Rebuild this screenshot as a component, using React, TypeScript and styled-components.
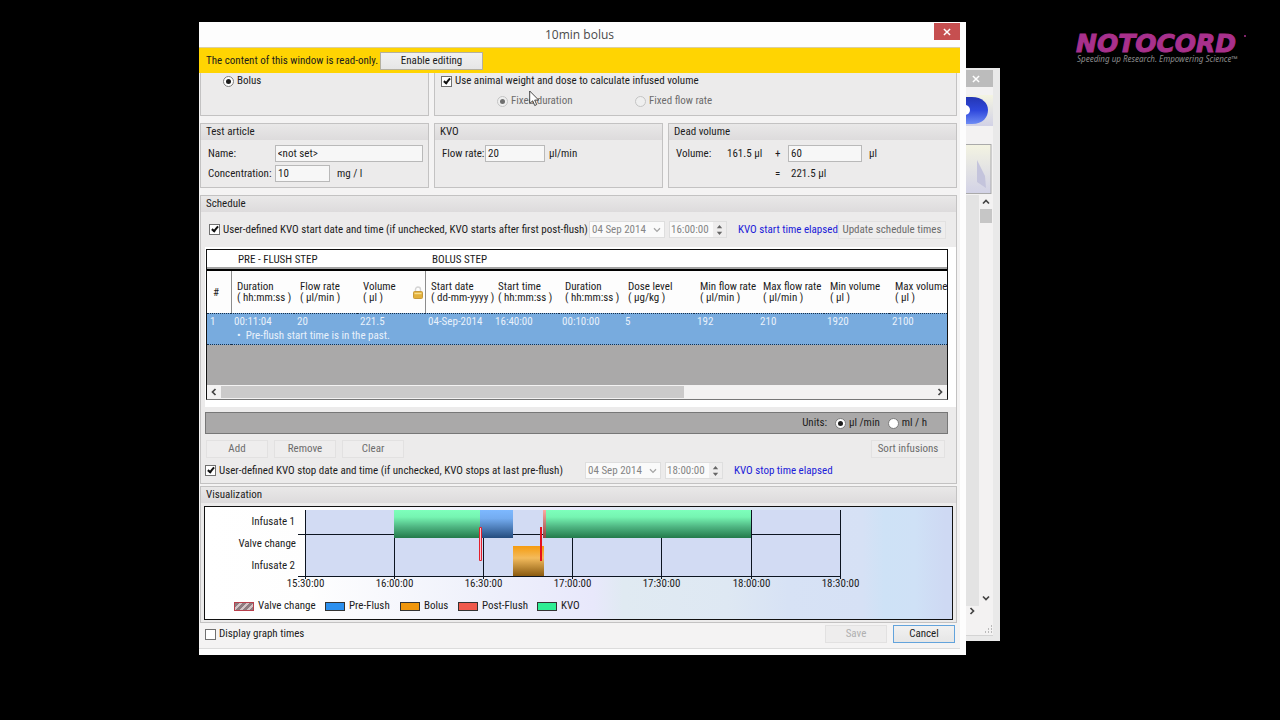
import React from "react";
import styled, { createGlobalStyle } from "styled-components";

const GlobalStyle = createGlobalStyle`
  *, *::before, *::after { box-sizing: border-box; }
  body {
    margin: 0;
    background: #000;
    color: #1c1c1c;
    font-family: "Roboto Condensed", "Liberation Sans", sans-serif;
    font-size: 11px;
    line-height: 12px;
  }
  button, input, select { font: inherit; color: inherit; margin: 0; }
`;

const Desktop = styled.main`
  position: relative;
  min-height: 100vh;
  overflow: hidden;
  background: #000;
`;

/* ---------- brand ---------- */

const Brand = styled.div`
  position: absolute;
  top: 31px;
  right: 24px;
  width: 180px;
`;

const BrandSvg = styled.svg`
  display: block;
  width: 100%;
  overflow: visible;
`;

/* ---------- window behind the dialog ---------- */

const BackWindow = styled.section`
  position: absolute;
  top: 68px;
  right: 280px;
  width: 300px;
  height: 573px;
  padding: 2px 7px 5px 0;
  background: #e9e9e9;
  display: flex;
  flex-direction: column;
  align-items: flex-end;
`;

const BackClose = styled.button`
  width: 34px;
  height: 17px;
  border: 0;
  padding: 0 1px 0 0;
  background: #bcbcbc;
  color: #fff;
  display: flex;
  align-items: center;
  justify-content: center;
`;

const BackToolbar = styled.div`
  width: 100%;
  height: 108px;
  padding-top: 8px;
  background: #f3f2f2;
  display: flex;
  flex-direction: column;
  align-items: flex-end;
  gap: 18px;
`;

const BackBody = styled.div`
  width: 100%;
  flex: 1;
  display: flex;
  justify-content: flex-end;
  background: #e3e3e3;
`;

const BackScroll = styled.div`
  width: 14px;
  background: #f3f2f2;
  display: flex;
  flex-direction: column;
  align-items: center;
  justify-content: space-between;
  padding: 3px 0 4px;
`;

const BackThumb = styled.div`
  width: 12px;
  height: 14px;
  margin-top: 3px;
  background: #c6c6c6;
`;

const ScrollTop = styled.div`
  display: flex;
  flex-direction: column;
  align-items: center;
`;

const BackFoot = styled.div`
  width: 100%;
  height: 30px;
  background: #f3f2f2;
  border-bottom: 1px solid #d4d4d4;
  display: flex;
  justify-content: flex-end;
  padding: 1px 0 1px;
`;

const BackFootInner = styled.div`
  width: 25px;
  display: flex;
  justify-content: space-between;
`;

const Grip = styled.svg`
  align-self: flex-end;
`;

/* ---------- dialog ---------- */

const Dialog = styled.section`
  position: absolute;
  top: 22px;
  left: 199px;
  right: 314px;
  padding: 0 6px 6px 0;
  background: #fdfdfd;
`;

const TitleBar = styled.header`
  height: 25px;
  display: grid;
  grid-template-columns: 1fr auto 1fr;
`;

const Title = styled.h1`
  grid-column: 2;
  margin: 0;
  font: 400 12px/26px "Open Sans", "Noto Sans", sans-serif;
  color: #4a4a4a;
`;

const CloseButton = styled.button`
  justify-self: end;
  width: 26px;
  height: 17px;
  margin-top: 1px;
  padding: 0;
  border: 0;
  background: #c64f50;
  display: flex;
  align-items: center;
  justify-content: center;
`;

const Banner = styled.div`
  height: 26px;
  border-top: 1px solid #d9cfa6;
  background: #ffd402;
  padding-left: 7px;
  display: flex;
  align-items: center;
  gap: 3px;
`;

const BannerText = styled.span`
  width: 171px;
  white-space: nowrap;
`;

const Button = styled.button<{ $w: number; $primary?: boolean; $faint?: boolean }>`
  width: ${(p) => p.$w}px;
  height: 18px;
  padding: 0;
  white-space: nowrap;
  border: 1px solid ${(p) => (p.$primary ? "#62a3dc" : "#b4b0a0")};
  background: linear-gradient(#f1f1f1, #e6e6e6);
  &:disabled {
    color: ${(p) => (p.$faint ? "#b0b0b0" : "#6c6c6c")};
    border-color: #e2e1e1;
    background: #eeeded;
  }
`;

const Body = styled.div`
  padding: 0 3px 0 1px;
  background: #f4f3f3;
  border-bottom: 1px solid #dcdcdc;
`;

const PanelRow = styled.div`
  display: grid;
  grid-template-columns: 229px 229px 1fr;
  gap: 5px;
  margin-bottom: 7px;
`;

const Panel = styled.section<{ $h?: number; $open?: boolean; $span?: number; $gap?: number }>`
  ${(p) => (p.$h ? `min-height: ${p.$h}px;` : "")}
  ${(p) => (p.$span ? `grid-column: span ${p.$span};` : "")}
  margin-bottom: ${(p) => p.$gap ?? 0}px;
  border: 1px solid #c3c2c2;
  ${(p) => (p.$open ? "border-top: 0;" : "")}
  background: #ecebeb;
`;

const PanelTitle = styled.h2`
  margin: 0;
  height: 16px;
  padding-left: 5px;
  font-size: 11px;
  font-weight: 400;
  line-height: 15px;
  background: linear-gradient(#e9e8e8, #dddbdc);
`;

const Fields = styled.div`
  padding: 5px 5px 0 7px;
  display: flex;
  flex-direction: column;
  gap: 3px;
`;

const FieldRow = styled.div`
  height: 17px;
  display: flex;
  align-items: center;
  white-space: nowrap;
`;

const FieldLabel = styled.label<{ $w: number }>`
  width: ${(p) => p.$w}px;
`;

const Value = styled.output<{ $w: number }>`
  width: ${(p) => p.$w}px;
`;

const TextInput = styled.input<{ $w: number; $after?: number }>`
  width: ${(p) => p.$w}px;
  margin-right: ${(p) => p.$after ?? 0}px;
  height: 17px;
  padding: 0 2px;
  border: 1px solid #b9b9b9;
  border-radius: 0;
  background: #f7f7f7;
`;

const CheckLabel = styled.label<{ $w?: number; $dim?: boolean }>`
  display: inline-flex;
  align-items: center;
  gap: 3px;
  white-space: nowrap;
  ${(p) => (p.$w ? `width: ${p.$w}px; flex: none;` : "")}
  color: ${(p) => (p.$dim ? "#6c6c6c" : "inherit")};
`;

const CheckBox = styled.input.attrs({ type: "checkbox" })`
  appearance: none;
  flex: none;
  width: 11px;
  height: 11px;
  border: 1px solid #707070;
  background: #fff;
  display: grid;
  place-items: center;
  &:checked::after {
    content: "";
    width: 4px;
    height: 7px;
    margin-bottom: 2px;
    border: solid #111;
    border-width: 0 2px 2px 0;
    transform: rotate(40deg);
  }
`;

const Radio = styled.input.attrs({ type: "radio" })`
  appearance: none;
  flex: none;
  width: 11px;
  height: 11px;
  border: 1px solid #7c7c7c;
  border-radius: 50%;
  background: #fff;
  display: grid;
  place-items: center;
  &:checked::after {
    content: "";
    width: 5px;
    height: 5px;
    border-radius: 50%;
    background: #1c1c1c;
  }
  &:disabled { border-color: #c4c4c4; background: #efefef; }
  &:disabled:checked::after { background: #6f6f6f; }
`;

const ModeOptions = styled.div`
  padding: 2px 0 0 6px;
  display: flex;
  flex-direction: column;
  gap: 8px;
`;

const TypeOptions = styled.div`
  padding: 2px 0 0 22px;
  display: flex;
`;

const SubOptions = styled.div`
  padding-left: 56px;
  display: grid;
  grid-template-columns: 138px auto;
  justify-content: start;
`;

/* ---------- schedule ---------- */

const KvoRow = styled.div<{ $indent: number; $h: number }>`
  height: ${(p) => p.$h}px;
  padding-left: ${(p) => p.$indent}px;
  display: flex;
  align-items: center;
`;

const DateBox = styled.span`
  position: relative;
  display: flex;
  flex: none;
  width: 76px;
  height: 17px;
`;

const DateSelect = styled.select`
  appearance: none;
  width: 100%;
  padding: 0 2px;
  border: 1px solid #dedede;
  border-radius: 0;
  background: #fafafa;
  &:disabled { color: #858585; opacity: 1; }
`;

const DateChevron = styled.svg`
  position: absolute;
  right: 4px;
  top: 6px;
  pointer-events: none;
`;

const TimeBox = styled.span`
  flex: none;
  display: flex;
  align-items: center;
  width: 58px;
  height: 17px;
  margin: 0 11px 0 4px;
  border: 1px solid #dedede;
  background: #eeeded;
`;

const TimeInput = styled.input`
  width: 43px;
  height: 15px;
  margin-right: 3px;
  padding: 0 1px;
  border: 0;
  background: #fafafa;
  &:disabled { color: #858585; }
`;

const Status = styled.span`
  width: 100px;
  flex: none;
  color: #2020d8;
  white-space: nowrap;
`;

const GridWrap = styled.div`
  margin-left: 4px;
  padding: 2px 8px 7px 1px;
  background: #fff;
`;

const GridFrame = styled.div`
  border: 1px solid #111;
  border-bottom-color: #777;
  background: #aaa9a9;
  overflow: hidden;
`;

const GridTable = styled.table`
  width: 100%;
  table-layout: fixed;
  border-collapse: separate;
  border-spacing: 0;
  line-height: 11px;
`;

const GroupHead = styled.th`
  height: 21px;
  padding: 0 0 1px 7px;
  text-align: left;
  font-weight: 400;
  background: #fff;
  border-bottom: 2px solid #000;
  box-shadow: inset 0 -2px #a3a3a3;
`;

const ColHead = styled.th<{ $line?: boolean }>`
  height: 42px;
  padding: 0 0 0 6px;
  text-align: left;
  font-weight: 400;
  white-space: pre;
  background: #fdfdfd;
  ${(p) => (p.$line ? "padding-left: 5px; border-left: 1px solid #8c8c8c;" : "")}
`;

const HeadWithLock = styled.span`
  display: flex;
  align-items: center;
  justify-content: space-between;
  padding-right: 2px;
`;

const Cell = styled.td`
  height: 16px;
  padding: 0 0 0 3px;
  overflow: hidden;
  white-space: nowrap;
  color: #e8f1fb;
  background: #78abde;
  border-top: 1px dotted #16304c;
`;

const NoteCell = styled.td`
  height: 16px;
  padding: 0 0 3px 6px;
  white-space: pre;
  color: #e8f1fb;
  background: #78abde;
  border-bottom: 1px dotted #16304c;
`;

const GridBlank = styled.div`
  height: 40px;
`;

const HScroll = styled.div`
  height: 14px;
  padding: 0 3px;
  background: #f3f2f2;
  display: flex;
  align-items: center;
  justify-content: space-between;
`;

const HTrack = styled.div`
  flex: 1;
  height: 12px;
  margin: 0 3px;
`;

const HThumb = styled.div`
  width: 65%;
  height: 100%;
  background: #cbcaca;
`;

const UnitsBar = styled.fieldset`
  height: 22px;
  margin: 5px 8px 6px 4px;
  padding: 0 20px 0 0;
  border: 1px solid #777;
  background: #aaa9a9;
  display: flex;
  align-items: center;
  justify-content: flex-end;
  gap: 8px;
`;

const ButtonRow = styled.div`
  padding: 0 11px 0 5px;
  display: flex;
  gap: 6px;
`;

const Spacer = styled.span`
  flex: 1;
`;

/* ---------- visualization ---------- */

const ChartBox = styled.div`
  margin: 3px 3px 2px;
  height: 114px;
  border: 1px solid #111;
  background: linear-gradient(
    90deg,
    #fff 0%, #fefefe 14%, #eef0fb 38%, #e8e8fb 52%, #e0eaf2 56%,
    #dee8f3 70%, #d7e2f5 78%, #d6e1f5 88%, #cee2f6 91%, #cfe1f6 95%, #ced9f3 99%
  );
`;

const ChartSvg = styled.svg`
  display: block;
  max-width: 100%;
  font-size: 11px;
`;

const Legend = styled.ul`
  list-style: none;
  margin: 8px 0 0;
  padding: 0 0 0 29px;
  display: flex;
  gap: 11px;
`;

const LegendItem = styled.li<{ $w: number }>`
  width: ${(p) => p.$w}px;
  display: flex;
  align-items: center;
  gap: 4px;
  white-space: nowrap;
`;

const Swatch = styled.span<{ $fill: string; $edge?: string }>`
  flex: none;
  width: 20px;
  height: 9px;
  border: 1px solid ${(p) => p.$edge ?? "#333"};
  background: ${(p) => p.$fill};
`;

const Footer = styled.footer`
  height: 25px;
  padding: 0 2px 3px 5px;
  display: flex;
  align-items: center;
  gap: 6px;
`;

const Pointer = styled.svg`
  position: absolute;
  left: 529px;
  top: 90px;
`;

/* ---------- small drawings ---------- */

const Cross = () => (
  <svg width="8" height="8" viewBox="0 0 7 7" aria-hidden>
    <path d="M.8.8 6.2 6.2M6.2.8.8 6.2" stroke="#fff" strokeWidth="1.3" />
  </svg>
);

const arrows = {
  left: "M5.5 1 2.5 4 5.5 7",
  right: "M2.5 1 5.5 4 2.5 7",
  up: "M1 5.5 4 2.5 7 5.5",
  down: "M1 2.5 4 5.5 7 2.5",
};

const Arrow = ({ dir }: { dir: keyof typeof arrows }) => (
  <svg width="8" height="8" viewBox="0 0 8 8" aria-hidden>
    <path d={arrows[dir]} fill="none" stroke="#444" strokeWidth="1.7" />
  </svg>
);

const Lock = () => (
  <svg width="10" height="13" viewBox="0 0 10 13" aria-hidden>
    <path d="M2.5 6V3.5a2.5 2.5 0 0 1 5 0V6" fill="none" stroke="#d4d4d4" strokeWidth="1.4" />
    <rect x=".5" y="5.5" width="9" height="7" rx="1" fill="#e3b13c" stroke="#c79a3c" />
    <path d="M1.5 7.5h7" stroke="#f8df8e" strokeWidth="1.4" />
  </svg>
);

/* ---------- pieces ---------- */

type KvoProps = { id: string; text: string; time: string; status: string; indent: number; h: number; children?: React.ReactNode };

const KvoSchedule = ({ id, text, time, status, indent, h, children }: KvoProps) => (
  <KvoRow $indent={indent} $h={h}>
    <CheckLabel $w={380}>
      <CheckBox defaultChecked />
      {text}
    </CheckLabel>
    <DateBox>
      <DateSelect disabled aria-label={`KVO ${id} date`}>
        <option>04 Sep 2014</option>
      </DateSelect>
      <DateChevron width="8" height="6" viewBox="0 0 8 6" aria-hidden>
        <path d="M1 1.2 4 4.4 7 1.2" fill="none" stroke="#a5a5a5" strokeWidth="1.3" />
      </DateChevron>
    </DateBox>
    <TimeBox>
      <TimeInput disabled defaultValue={time} aria-label={`KVO ${id} time`} />
      <svg width="7" height="12" viewBox="0 0 7 12" aria-hidden>
        <path d="M3.5 1 6.2 4.3H.8zM3.5 11 .8 7.7h5.4z" fill="#666" />
      </svg>
    </TimeBox>
    <Status>{status}</Status>
    {children}
  </KvoRow>
);

const widths = [24, 63, 63, 68, 67, 67, 63, 72, 63, 67, 65];

const columns: [string, string][] = [
  ["Duration", "( hh:mm:ss )"],
  ["Flow rate", "( µl/min )"],
  ["Volume", "( µl )"],
  ["Start date", "( dd-mm-yyyy )"],
  ["Start time", "( hh:mm:ss )"],
  ["Duration", "( hh:mm:ss )"],
  ["Dose level", "( µg/kg )"],
  ["Min flow rate", "( µl/min )"],
  ["Max flow rate", "( µl/min )"],
  ["Min volume", "( µl )"],
  ["Max volume", "( µl )"],
];

const values = ["1", "00:11:04", "20", "221.5", "04-Sep-2014", "16:40:00", "00:10:00", "5", "192", "210", "1920", "2100"];

const ScheduleGrid = () => (
  <GridTable>
    <colgroup>
      {widths.map((w, i) => (
        <col key={i} width={w} />
      ))}
      <col />
    </colgroup>
    <thead>
      <tr>
        <GroupHead />
        <GroupHead colSpan={3}>PRE - FLUSH STEP</GroupHead>
        <GroupHead colSpan={8}>BOLUS STEP</GroupHead>
      </tr>
      <tr>
        <ColHead>#</ColHead>
        {columns.map(([name, unit], i) => (
          <ColHead key={i} $line={i === 0 || i === 3}>
            {i === 2 ? (
              <HeadWithLock>
                <span>{name + "\n" + unit}</span>
                <Lock />
              </HeadWithLock>
            ) : (
              name + "\n" + unit
            )}
          </ColHead>
        ))}
      </tr>
    </thead>
    <tbody>
      <tr>
        {values.map((v, i) => (
          <Cell key={i}>{v}</Cell>
        ))}
      </tr>
      <tr>
        <NoteCell />
        <NoteCell colSpan={11}>{"•  Pre-flush start time is in the past."}</NoteCell>
      </tr>
    </tbody>
  </GridTable>
);

const ticks = ["15:30:00", "16:00:00", "16:30:00", "17:00:00", "17:30:00", "18:00:00", "18:30:00"];
const tickX = (i: number) => Math.floor(100 + i * 89.2) + 0.5;

const Timeline = () => (
  <ChartSvg width="700" height="85" viewBox="0 0 700 85" role="img" aria-label="Infusion timeline">
    <defs>
      <linearGradient id="kvo" x2="0" y2="1">
        <stop offset="0" stopColor="#7dffbb" />
        <stop offset=".25" stopColor="#76f5b2" />
        <stop offset=".6" stopColor="#4fb582" />
        <stop offset="1" stopColor="#237a4a" />
      </linearGradient>
      <linearGradient id="pre" x2="0" y2="1">
        <stop offset="0" stopColor="#7db8ff" />
        <stop offset=".3" stopColor="#74acf0" />
        <stop offset="1" stopColor="#244c7e" />
      </linearGradient>
      <linearGradient id="bolus" x2="0" y2="1">
        <stop offset="0" stopColor="#f59b0e" />
        <stop offset=".4" stopColor="#f3bb5c" />
        <stop offset="1" stopColor="#8a5a10" />
      </linearGradient>
      <linearGradient id="post" x2="0" y2="1">
        <stop offset="0" stopColor="#ffa8a0" />
        <stop offset="1" stopColor="#8c4640" />
      </linearGradient>
    </defs>
    <rect x="100" y="3" width="536" height="67" fill="#d2dbf3" />
    <g stroke="#0c1420">
      {ticks.map((t, i) => (
        <path key={t} d={`M${tickX(i)} 3V72`} />
      ))}
      <path d="M93 27.5H636M93 69.5H636" />
    </g>
    <rect x="189" y="3" width="86" height="28" fill="url(#kvo)" />
    <rect x="275" y="3" width="33" height="28" fill="url(#pre)" />
    <rect x="308" y="39" width="31" height="30" fill="url(#bolus)" />
    <rect x="338" y="3" width="3" height="28" fill="url(#post)" />
    <rect x="341" y="3" width="205" height="28" fill="url(#kvo)" />
    <path d="M274.5 20.5h2v33h-2z" fill="#f6c8d4" stroke="#e3202c" />
    <path d="M336 20v34" stroke="#e3101c" strokeWidth="2" />
    <g fill="#1c1c1c" textAnchor="end">
      <text x="90" y="18">Infusate 1</text>
      <text x="91" y="40">Valve change</text>
      <text x="90" y="62">Infusate 2</text>
    </g>
    <g fill="#1c1c1c" textAnchor="middle">
      {ticks.map((t, i) => (
        <text key={t} x={tickX(i)} y="80">
          {t}
        </text>
      ))}
    </g>
  </ChartSvg>
);

const hatch = "repeating-linear-gradient(135deg, #8e7c80 0 3px, #d3c4c6 3px 5px)";
const legend: [string, string, number, string?][] = [
  ["Valve change", hatch, 80, "#b8404c"],
  ["Pre-Flush", "#2c90ee", 64],
  ["Bolus", "#f0960c", 47],
  ["Post-Flush", "#f05a4c", 68],
  ["KVO", "#2eee94", 44],
];

export default function App() {
  return (
    <Desktop>
      <GlobalStyle />

      <Brand>
        <BrandSvg viewBox="0 0 180 34" role="img" aria-label="Notocord">
          <text x="0" y="21" fill="#a8308c" stroke="#a8308c" strokeWidth="1" fontFamily="'DejaVu Sans', sans-serif" fontWeight="700" fontStyle="italic" fontSize="25">
            NOTOCORD
          </text>
          <circle cx="169" cy="5" r="1" fill="#a8308c" />
          <text x="1" y="31" fill="#8c8c8c" fontFamily="'Noto Sans', 'Open Sans', sans-serif" fontStyle="italic" fontSize="8">
            Speeding up Research. Empowering Science™
          </text>
        </BrandSvg>
      </Brand>

      <BackWindow>
        <BackClose aria-label="Close window">
          <Cross />
        </BackClose>
        <BackToolbar>
          <svg width="34" height="31" viewBox="0 0 34 31" aria-hidden>
            <defs>
              <linearGradient id="blob" x2="0" y2="1">
                <stop offset="0" stopColor="#2436b4" />
                <stop offset=".5" stopColor="#2f48dc" />
                <stop offset="1" stopColor="#6e8cf4" />
              </linearGradient>
              <linearGradient id="tile" x2="0" y2="1">
                <stop offset="0" stopColor="#f4f4e2" />
                <stop offset="1" stopColor="#d2d2e6" />
              </linearGradient>
            </defs>
            <rect width="34" height="31" fill="url(#tile)" />
            <path d="M0 2h13c10 0 16 6 16 13S24 29 13 29H0z" fill="url(#blob)" />
            <circle cx="6" cy="15" r="5" fill="#fff" />
          </svg>
          <svg width="34" height="50" viewBox="0 0 34 50" aria-hidden>
            <rect x="-1" y=".5" width="33" height="49" fill="url(#tile)" stroke="#aaa" />
            <path d="M18 16 26 32 27 44 18 38z" fill="#c4c4dc" />
          </svg>
        </BackToolbar>
        <BackBody>
          <BackScroll>
            <ScrollTop>
              <Arrow dir="up" />
              <BackThumb />
            </ScrollTop>
            <Arrow dir="down" />
          </BackScroll>
        </BackBody>
        <BackFoot>
          <BackFootInner>
            <Arrow dir="right" />
            <Grip width="9" height="9" viewBox="0 0 9 9" aria-hidden>
              <path d="M7 1h1M4 4h1M7 4h1M1 7h1M4 7h1M7 7h1" stroke="#a8a8a8" strokeWidth="1.6" />
            </Grip>
          </BackFootInner>
        </BackFoot>
      </BackWindow>

      <Dialog role="dialog" aria-labelledby="dialog-title">
        <TitleBar>
          <Title id="dialog-title">10min bolus</Title>
          <CloseButton aria-label="Close">
            <Cross />
          </CloseButton>
        </TitleBar>
        <Banner>
          <BannerText>The content of this window is read-only.</BannerText>
          <Button $w={103}>Enable editing</Button>
        </Banner>

        <Body>
          <PanelRow>
            <Panel $h={43} $open>
              <TypeOptions>
                <CheckLabel>
                  <Radio name="type" defaultChecked />
                  Bolus
                </CheckLabel>
              </TypeOptions>
            </Panel>
            <Panel $h={43} $open $span={2}>
              <ModeOptions>
                <CheckLabel>
                  <CheckBox defaultChecked />
                  Use animal weight and dose to calculate infused volume
                </CheckLabel>
                <SubOptions>
                  <CheckLabel $dim>
                    <Radio name="mode" defaultChecked disabled />
                    Fixed duration
                  </CheckLabel>
                  <CheckLabel $dim>
                    <Radio name="mode" disabled />
                    Fixed flow rate
                  </CheckLabel>
                </SubOptions>
              </ModeOptions>
            </Panel>
          </PanelRow>

          <PanelRow>
            <Panel $h={65}>
              <PanelTitle>Test article</PanelTitle>
              <Fields>
                <FieldRow>
                  <FieldLabel $w={67} htmlFor="name">Name:</FieldLabel>
                  <TextInput $w={149} id="name" defaultValue="<not set>" />
                </FieldRow>
                <FieldRow>
                  <FieldLabel $w={67} htmlFor="conc">Concentration:</FieldLabel>
                  <TextInput $w={55} $after={7} id="conc" defaultValue="10" />
                  mg / l
                </FieldRow>
              </Fields>
            </Panel>
            <Panel $h={65}>
              <PanelTitle>KVO</PanelTitle>
              <Fields>
                <FieldRow>
                  <FieldLabel $w={43} htmlFor="flow">Flow rate:</FieldLabel>
                  <TextInput $w={60} $after={4} id="flow" defaultValue="20" />
                  µl/min
                </FieldRow>
              </Fields>
            </Panel>
            <Panel $h={65}>
              <PanelTitle>Dead volume</PanelTitle>
              <Fields>
                <FieldRow>
                  <FieldLabel $w={51} htmlFor="dead">Volume:</FieldLabel>
                  <Value $w={48}>161.5 µl</Value>
                  <Value $w={13}>+</Value>
                  <TextInput $w={74} $after={7} id="dead" defaultValue="60" />
                  µl
                </FieldRow>
                <FieldRow>
                  <Value $w={99} />
                  <Value $w={16}>=</Value>
                  <Value $w={48}>221.5 µl</Value>
                </FieldRow>
              </Fields>
            </Panel>
          </PanelRow>

          <Panel $h={289} $gap={2}>
            <PanelTitle>Schedule</PanelTitle>
            <KvoSchedule
              id="start"
              text="User-defined KVO start date and time (if unchecked, KVO starts after first post-flush)"
              time="16:00:00"
              status="KVO start time elapsed"
              indent={8}
              h={35}
            >
              <Button $w={108} disabled>Update schedule times</Button>
            </KvoSchedule>
            <GridWrap>
              <GridFrame>
                <ScheduleGrid />
                <GridBlank />
                <HScroll>
                  <Arrow dir="left" />
                  <HTrack>
                    <HThumb />
                  </HTrack>
                  <Arrow dir="right" />
                </HScroll>
              </GridFrame>
            </GridWrap>
            <UnitsBar aria-label="Units">
              <span>Units:</span>
              <CheckLabel>
                <Radio name="units" defaultChecked />
                µl /min
              </CheckLabel>
              <CheckLabel>
                <Radio name="units" />
                ml / h
              </CheckLabel>
            </UnitsBar>
            <ButtonRow>
              <Button $w={62} disabled>Add</Button>
              <Button $w={62} disabled>Remove</Button>
              <Button $w={62} disabled>Clear</Button>
              <Spacer />
              <Button $w={74} disabled>Sort infusions</Button>
            </ButtonRow>
            <KvoSchedule
              id="stop"
              text="User-defined KVO stop date and time (if unchecked, KVO stops at last pre-flush)"
              time="18:00:00"
              status="KVO stop time elapsed"
              indent={4}
              h={25}
            />
          </Panel>

          <Panel $h={137}>
            <PanelTitle>Visualization</PanelTitle>
            <ChartBox>
              <Timeline />
              <Legend>
                {legend.map(([name, fill, w, edge]) => (
                  <LegendItem key={name} $w={w}>
                    <Swatch $fill={fill} $edge={edge} />
                    {name}
                  </LegendItem>
                ))}
              </Legend>
            </ChartBox>
          </Panel>

          <Footer>
            <CheckLabel>
              <CheckBox />
              Display graph times
            </CheckLabel>
            <Spacer />
            <Button $w={62} $faint disabled>Save</Button>
            <Button $w={62} $primary>Cancel</Button>
          </Footer>
        </Body>
      </Dialog>

      <Pointer width="11" height="17" viewBox="0 0 11 17" aria-hidden>
        <path d="M.7 1v12.5l3-2.7 2 4.7 2-.9-2-4.5h4z" fill="#fff" stroke="#333" strokeWidth=".9" />
      </Pointer>
    </Desktop>
  );
}
